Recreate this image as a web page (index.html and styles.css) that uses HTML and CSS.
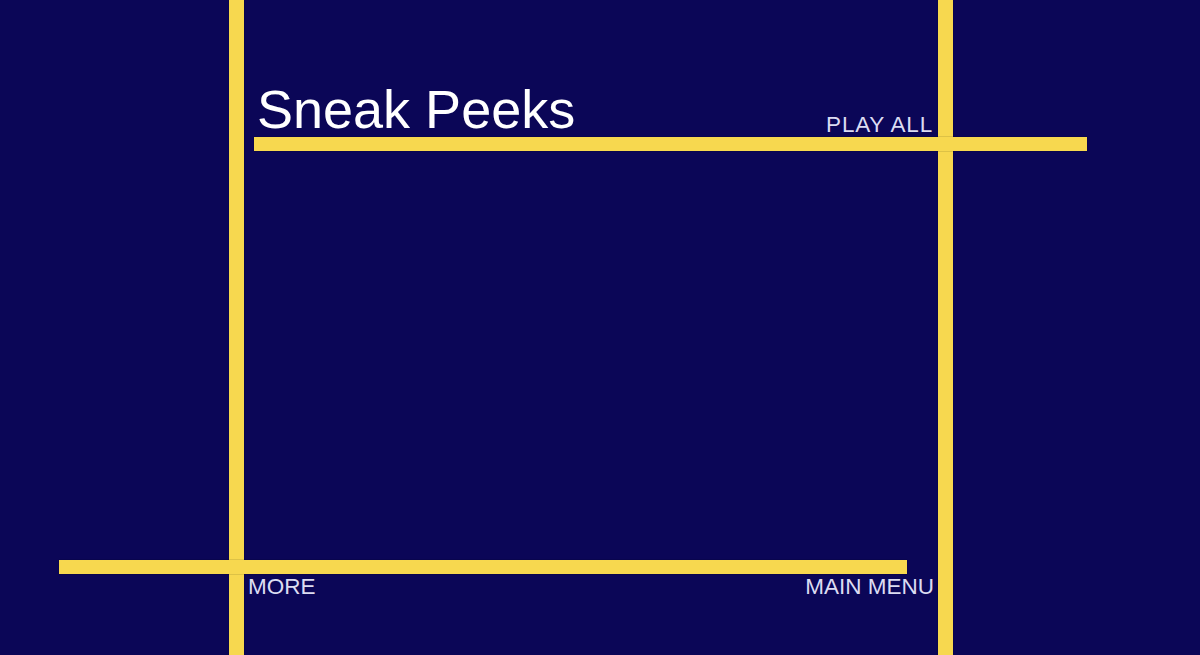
FILE: index.html
```html
<!DOCTYPE html>
<html lang="en">
<head>
<meta charset="utf-8">
<title>Sneak Peeks</title>
<link rel="stylesheet" href="styles.css">
</head>
<body>
<div class="stage">
  <div class="line vline vline-left"></div>
  <div class="line vline vline-right"></div>
  <div class="line hline hline-top"></div>
  <div class="line hline hline-bottom"></div>

  <header class="header">
    <h1 class="title">Sneak Peeks</h1>
    <span class="menu-item play-all">PLAY ALL</span>
  </header>
  <div class="spacer"></div>
  <footer class="footer">
    <span class="menu-item">MORE</span>
    <span class="menu-item">MAIN MENU</span>
  </footer>
</div>
</body>
</html>
```
FILE: styles.css
```css
html, body {
  margin: 0;
  padding: 0;
  background: #0b0657;
}
.stage {
  position: relative;
  width: 1200px;
  height: 655px;
  overflow: hidden;
  background: #0b0657;
  display: flex;
  flex-direction: column;
  font-family: "Liberation Sans", Arial, sans-serif;
}
.line {
  position: absolute;
  background: #f7d84f;
  box-shadow: 0 0 1px rgba(0,0,0,0.6);
}
.vline { top: 0; width: 15px; height: 655px; }
.vline-left { left: 229px; }
.vline-right { left: 938px; }
.hline { height: 14px; }
.hline-top { left: 254px; top: 137px; width: 833px; }
.hline-bottom { left: 59px; top: 560px; width: 848px; }

.header {
  display: flex;
  justify-content: space-between;
  align-items: flex-start;
  padding: 82px 268px 0 257px;
}
.title {
  margin: 0;
  font-size: 54px;
  line-height: 54px;
  font-weight: normal;
  color: #ffffff;
}
.menu-item {
  font-size: 22.5px;
  line-height: 22px;
  color: #dcdcf2;
}
.play-all {
  margin-top: 32px;
  letter-spacing: 0.8px;
  margin-right: -1px;
}
.spacer { flex: 1; }
.footer {
  display: flex;
  justify-content: space-between;
  padding: 0 266px 57px 248px;
}
```
